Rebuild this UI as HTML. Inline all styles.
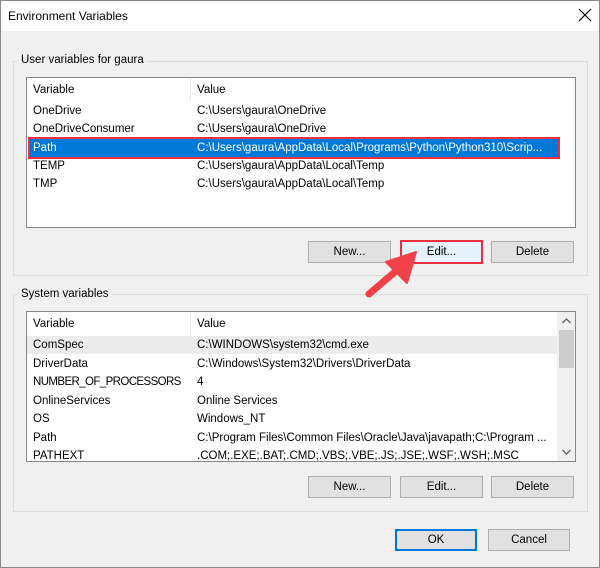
<!DOCTYPE html>
<html><head><style>
*{margin:0;padding:0;box-sizing:border-box}
body{width:600px;height:568px;overflow:hidden;background:#f0f0f0;font-family:"Liberation Sans",sans-serif;font-size:11.5px;color:#000;position:relative}
.abs{position:absolute}
.win{position:absolute;left:0;top:0;width:600px;height:568px;border:1px solid #888;}
.title{position:absolute;left:0;top:0;width:600px;height:31px;background:#fff}
.group{position:absolute;border:1px solid #dcdcdc}
.glabel{position:absolute;background:#f0f0f0;padding:0 3px}
.list{position:absolute;background:#fff;border:1px solid #828790;overflow:hidden}
.row{position:absolute;left:0;height:18px;line-height:18px;white-space:nowrap;width:100%}
.row span{position:absolute}
.btn{position:absolute;height:22px;background:#e1e1e1;border:1px solid #adadad;text-align:center;line-height:20px}
</style></head><body>
<div class="title"></div>
<div class="abs" style="left:8px;top:9px;font-size:12px">Environment Variables</div>
<svg class="abs" style="left:578px;top:8px" width="14" height="14"><path d="M1 1L13 13M13 1L1 13" stroke="#000" stroke-width="1.2"/></svg>
<div class="win"></div>

<div class="group" style="left:13px;top:61px;width:575px;height:215px"></div>
<div class="glabel" style="left:18px;top:54px">User variables for gaura</div>
<div class="list" style="left:26px;top:77px;width:550px;height:151px">
 <div class="abs" style="left:163px;top:0;width:1px;height:22px;background:#e5e5e5"></div>
 <div class="row" style="top:3px"><span style="left:6px">Variable</span><span style="left:170px">Value</span></div>
 <div class="row" style="top:24px"><span style="left:6px">OneDrive</span><span style="left:170px">C:\Users\gaura\OneDrive</span></div>
 <div class="row" style="top:42px"><span style="left:6px">OneDriveConsumer</span><span style="left:170px">C:\Users\gaura\OneDrive</span></div>
 <div class="row" style="top:61px;background:#0078d7;color:#fff;left:3px;width:528px;outline:2px solid #e8303e"><span style="left:3px">Path</span><span style="left:167px">C:\Users\gaura\AppData\Local\Programs\Python\Python310\Scrip...</span></div>
 <div class="row" style="top:79px"><span style="left:6px">TEMP</span><span style="left:170px">C:\Users\gaura\AppData\Local\Temp</span></div>
 <div class="row" style="top:97px"><span style="left:6px">TMP</span><span style="left:170px">C:\Users\gaura\AppData\Local\Temp</span></div>
</div>
<div class="btn" style="left:308px;top:241px;width:83px">New...</div>
<div class="btn" style="left:400px;top:240px;width:83px;height:24px;background:#e5f1fb;border:2px solid #e8303e;line-height:20px">Edit...</div>
<div class="btn" style="left:491px;top:241px;width:83px">Delete</div>

<div class="group" style="left:13px;top:294px;width:575px;height:218px"></div>
<div class="glabel" style="left:18px;top:288px">System variables</div>
<div class="list" style="left:26px;top:311px;width:550px;height:151px">
 <div class="abs" style="left:163px;top:0;width:1px;height:22px;background:#e5e5e5"></div>
 <div class="row" style="top:3px"><span style="left:6px">Variable</span><span style="left:170px">Value</span></div>
 <div class="row" style="top:24px;background:#ececec"><span style="left:6px">ComSpec</span><span style="left:170px">C:\WINDOWS\system32\cmd.exe</span></div>
 <div class="row" style="top:43px"><span style="left:6px">DriverData</span><span style="left:170px">C:\Windows\System32\Drivers\DriverData</span></div>
 <div class="row" style="top:61px"><span style="left:6px;letter-spacing:-0.6px">NUMBER_OF_PROCESSORS</span><span style="left:170px">4</span></div>
 <div class="row" style="top:80px"><span style="left:6px">OnlineServices</span><span style="left:170px">Online Services</span></div>
 <div class="row" style="top:98px"><span style="left:6px">OS</span><span style="left:170px">Windows_NT</span></div>
 <div class="row" style="top:117px"><span style="left:6px">Path</span><span style="left:170px">C:\Program Files\Common Files\Oracle\Java\javapath;C:\Program ...</span></div>
 <div class="row" style="top:135px"><span style="left:6px">PATHEXT</span><span style="left:170px">.COM;.EXE;.BAT;.CMD;.VBS;.VBE;.JS;.JSE;.WSF;.WSH;.MSC</span></div>
 <div class="abs" style="left:530px;top:0;width:19px;height:149px;background:#f0f0f0"></div>
 <div class="abs" style="left:532px;top:18px;width:15px;height:38px;background:#cdcdcd"></div>
 <svg class="abs" style="left:534px;top:5px" width="11" height="8"><path d="M1.5 6L5.5 2L9.5 6" fill="none" stroke="#606060" stroke-width="1.3"/></svg>
 <svg class="abs" style="left:534px;top:136px" width="11" height="8"><path d="M1.5 2L5.5 6L9.5 2" fill="none" stroke="#606060" stroke-width="1.3"/></svg>
</div>
<div class="btn" style="left:308px;top:476px;width:83px">New...</div>
<div class="btn" style="left:400px;top:476px;width:83px">Edit...</div>
<div class="btn" style="left:491px;top:476px;width:83px">Delete</div>

<div class="btn" style="left:395px;top:529px;width:82px;border:2px solid #0078d7;line-height:18px">OK</div>
<div class="btn" style="left:488px;top:529px;width:82px">Cancel</div>

<svg class="abs" style="left:0;top:0" width="600" height="568">
 <line x1="369" y1="294" x2="396" y2="271" stroke="#f0404a" stroke-width="7" stroke-linecap="round"/>
 <polygon points="416,252 386,262 407,283" fill="#f0404a" stroke="#f0404a" stroke-width="2" stroke-linejoin="round"/>
</svg>
</body></html>
